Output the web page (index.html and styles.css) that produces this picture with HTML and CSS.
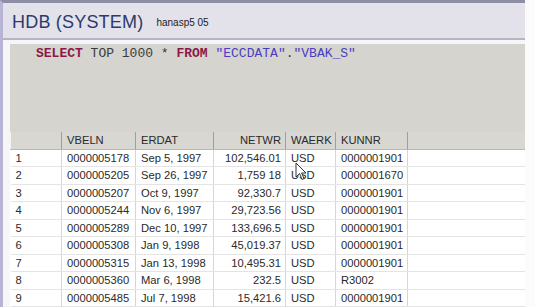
FILE: index.html
```html
<!DOCTYPE html>
<html lang="en">
<head>
    <meta charset="UTF-8">
    <title>HDB (SYSTEM)</title>
    <link rel="stylesheet" href="styles.css">
</head>
<body>
    <div class="window">
        <div class="title-bar">
            <span class="title">HDB (SYSTEM)</span>
            <span class="host">hanasp5 05</span>
        </div>
        <div class="divider"></div>
        <div class="panel">
            <div class="editor"><span class="kw">SELECT</span> TOP 1000 * <span class="kw">FROM</span> <span class="str">"ECCDATA"</span>.<span class="str">"VBAK_S"</span></div>
            <table class="grid">
                <thead>
                    <tr>
                        <th class="c-num"></th>
                        <th class="c-vbeln">VBELN</th>
                        <th class="c-erdat">ERDAT</th>
                        <th class="c-netwr num">NETWR</th>
                        <th class="c-waerk">WAERK</th>
                        <th class="c-kunnr">KUNNR</th>
                        <th></th>
                    </tr>
                </thead>
                <tbody>
                    <tr><td>1</td><td>0000005178</td><td>Sep 5, 1997</td><td class="num">102,546.01</td><td>USD</td><td>0000001901</td><td></td></tr>
                    <tr><td>2</td><td>0000005205</td><td>Sep 26, 1997</td><td class="num">1,759 18</td><td>USD</td><td>0000001670</td><td></td></tr>
                    <tr><td>3</td><td>0000005207</td><td>Oct 9, 1997</td><td class="num">92,330.7</td><td>USD</td><td>0000001901</td><td></td></tr>
                    <tr><td>4</td><td>0000005244</td><td>Nov 6, 1997</td><td class="num">29,723.56</td><td>USD</td><td>0000001901</td><td></td></tr>
                    <tr><td>5</td><td>0000005289</td><td>Dec 10, 1997</td><td class="num">133,696.5</td><td>USD</td><td>0000001901</td><td></td></tr>
                    <tr><td>6</td><td>0000005308</td><td>Jan 9, 1998</td><td class="num">45,019.37</td><td>USD</td><td>0000001901</td><td></td></tr>
                    <tr><td>7</td><td>0000005315</td><td>Jan 13, 1998</td><td class="num">10,495.31</td><td>USD</td><td>0000001901</td><td></td></tr>
                    <tr><td>8</td><td>0000005360</td><td>Mar 6, 1998</td><td class="num">232.5</td><td>USD</td><td>R3002</td><td></td></tr>
                    <tr><td>9</td><td>0000005485</td><td>Jul 7, 1998</td><td class="num">15,421.6</td><td>USD</td><td>0000001901</td><td></td></tr>
                </tbody>
            </table>
        </div>
        <svg class="cursor" width="12" height="19" viewBox="0 0 12 19">
            <path d="M1 1 L1 15 L4.5 11.5 L7 17.5 L9 16.6 L6.6 11 L11 11 Z" fill="#fff" stroke="#333" stroke-width="1"/>
        </svg>
    </div>
</body>
</html>
```

FILE: styles.css
```css
* {
    margin: 0;
    padding: 0;
    box-sizing: border-box;
}

body {
    background-color: #fbfbfb;
    font-family: "Liberation Sans", Arial, sans-serif;
    width: 535px;
    height: 307px;
    overflow: hidden;
}

.window {
    position: relative;
    width: 525px;
    height: 307px;
    background-color: #f6f5f8;
    border-top: 3px solid #8e8da6;
    border-left: 3px solid #b8b4d6;
}

.title-bar {
    height: 35px;
    background-color: #e3e2eb;
    display: flex;
    align-items: center;
    padding-left: 9px;
    padding-top: 4px;
}

.title {
    font-size: 18px;
    color: #2c3a6c;
    letter-spacing: 0.2px;
}

.host {
    font-size: 10px;
    color: #222;
    margin-left: 13px;
}

.divider {
    height: 2px;
    background-color: #b6b5be;
}

.panel {
    margin-top: 4px;
    margin-left: 7px;
}

.editor {
    height: 88px;
    background-color: #d5d4ce;
    font-family: "Liberation Mono", "Courier New", monospace;
    font-size: 13px;
    color: #3a3a3a;
    padding: 2px 0 0 26px;
    white-space: pre;
}

.editor .kw {
    color: #8c1848;
    font-weight: bold;
}

.editor .str {
    color: #4a3cc4;
}

.grid {
    width: 515px;
    border-collapse: collapse;
    table-layout: fixed;
    font-size: 11.2px;
    color: #2a2a2a;
    background-color: #fff;
}

.grid th {
    height: 17px;
    background-color: #d8d7d1;
    font-weight: normal;
    text-align: left;
    padding: 0 5px;
    border-left: 1px solid #f4f4f2;
    border-right: 1px solid #9f9e98;
    border-bottom: 1px solid #b8b7b1;
}

.grid td {
    height: 17.5px;
    padding: 0 5px;
    border-right: 1px solid #d6d6d6;
    border-bottom: 1px solid #e4e4e4;
    white-space: nowrap;
    overflow: hidden;
}

.grid td:last-child,
.grid th:last-child {
    border-right: none;
}

.grid .num {
    text-align: right;
    padding-right: 4px;
}

.c-num { width: 51px; }
.c-vbeln { width: 74px; }
.c-erdat { width: 78px; }
.c-netwr { width: 72px; }
.c-waerk { width: 50px; }
.c-kunnr { width: 72px; }

.cursor {
    position: absolute;
    left: 292px;
    top: 159px;
}
```
